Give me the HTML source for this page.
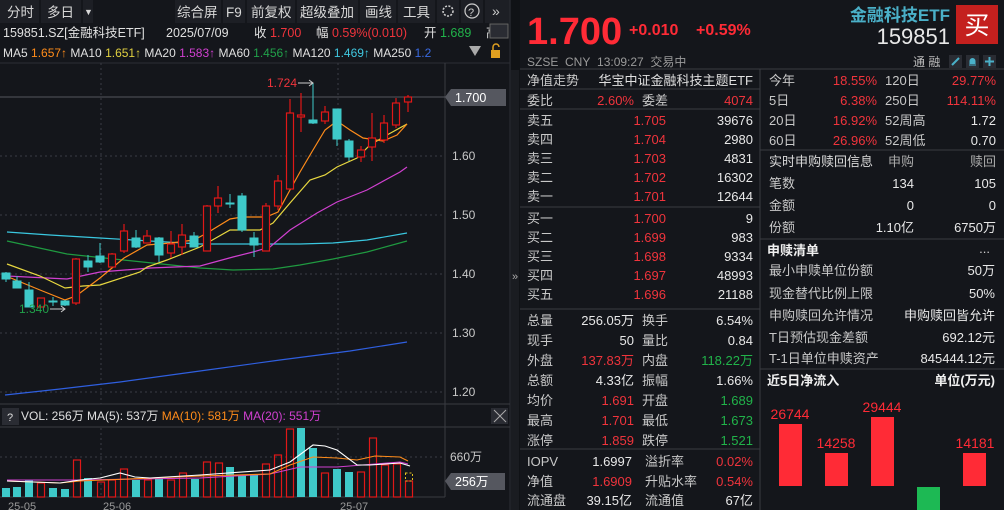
<!DOCTYPE html>
<html><head><meta charset="utf-8"><style>
html,body{margin:0;padding:0;background:#14161b;width:1004px;height:510px;overflow:hidden}
svg{display:block;font-family:"Liberation Sans","Noto Sans CJK SC",sans-serif}
</style></head><body>
<svg width="1004" height="510" viewBox="0 0 1004 510" xmlns="http://www.w3.org/2000/svg">
<rect width="1004" height="510" fill="#14161b"/>
<!-- toolbar -->
<g fill="#1d1f25">
<rect x="0" y="0" width="39" height="23"/><rect x="41" y="0" width="40" height="23"/><rect x="83" y="0" width="10" height="23"/>
<rect x="175" y="0" width="46" height="23"/><rect x="223" y="0" width="22" height="23"/><rect x="247" y="0" width="48" height="23"/><rect x="297" y="0" width="61" height="23"/><rect x="360" y="0" width="36" height="23"/><rect x="398" y="0" width="37" height="23"/><rect x="437" y="0" width="22" height="23"/><rect x="461" y="0" width="22" height="23"/><rect x="485" y="0" width="25" height="23"/>
</g>
<g fill="#d8d8d8" font-size="13.5">
<text x="7" y="17">分时</text><text x="47" y="17">多日</text><text x="84" y="15" font-size="9">▼</text>
<text x="177" y="17">综合屏</text><text x="226" y="17">F9</text><text x="251" y="17">前复权</text><text x="300" y="17">超级叠加</text><text x="365" y="17">画线</text><text x="403" y="17">工具</text>
</g>
<circle cx="448" cy="11" r="5" fill="none" stroke="#ccc" stroke-width="1.6" stroke-dasharray="2 1.4"/>
<circle cx="472" cy="11" r="7" fill="none" stroke="#ccc" stroke-width="1.2"/><text x="468" y="16" fill="#ccc" font-size="11">?</text>
<text x="492" y="16" fill="#ccc" font-size="14">»</text>
<!-- info row -->
<g font-size="12.5">
<text x="3" y="37" fill="#e0e0e0">159851.SZ[金融科技ETF]</text>
<text x="166" y="37" fill="#e0e0e0">2025/07/09</text>
<text x="254" y="37" fill="#e0e0e0">收</text><text x="270" y="37" fill="#f0343c">1.700</text>
<text x="316" y="37" fill="#e0e0e0">幅</text><text x="332" y="37" fill="#f0343c">0.59%(0.010)</text>
<text x="424" y="37" fill="#e0e0e0">开</text><text x="440" y="37" fill="#21b34a">1.689</text>
<text x="486" y="37" fill="#e0e0e0">高</text>
</g>
<rect x="490" y="24" width="18" height="14" fill="#2a2c33" stroke="#666"/>
<g font-size="12">
<text x="3" y="57" fill="#e0e0e0">MA5 <tspan fill="#ff8c1a">1.657↑</tspan> MA10 <tspan fill="#e0d040">1.651↑</tspan> MA20 <tspan fill="#d040d0">1.583↑</tspan> MA60 <tspan fill="#21a04a">1.456↑</tspan> MA120 <tspan fill="#40c8e0">1.469↑</tspan> MA250 <tspan fill="#3a6ae0">1.2</tspan></text>
</g>
<path d="M469 46 L481 46 L475 56 Z" fill="#aaa"/>
<rect x="491" y="50" width="9" height="8" fill="#e0a020"/><path d="M493 50 v-3 a3 3 0 0 1 6 0" fill="none" stroke="#e0a020" stroke-width="1.5"/>
<line x1="0" y1="63" x2="510" y2="63" stroke="#2c2e34"/>
<!-- chart grid -->
<line x1="445" y1="63" x2="445" y2="497" stroke="#3a3c42"/>
<line x1="510" y1="0" x2="510" y2="510" stroke="#2c2e34"/>
<g stroke="#3a3c44" stroke-dasharray="2 3">
<line x1="0" y1="156" x2="445" y2="156"/><line x1="0" y1="215" x2="445" y2="215"/><line x1="0" y1="274" x2="445" y2="274"/><line x1="0" y1="333" x2="445" y2="333"/><line x1="0" y1="392" x2="445" y2="392"/><line x1="0" y1="457" x2="445" y2="457"/>
<line x1="101" y1="63" x2="101" y2="404"/><line x1="338" y1="63" x2="338" y2="404"/><line x1="101" y1="428" x2="101" y2="497"/><line x1="338" y1="428" x2="338" y2="497"/>
</g>
<line x1="0" y1="97" x2="445" y2="97" stroke="#55575d"/>
<g fill="#c8c8c8" font-size="12">
<text x="452" y="160">1.60</text><text x="452" y="219">1.50</text><text x="452" y="278">1.40</text><text x="452" y="337">1.30</text><text x="452" y="396">1.20</text>
</g>
<path d="M445 97 L451 89 H506 V106 H451 Z" fill="#55575f"/>
<text x="455" y="102" fill="#fff" font-size="12.5">1.700</text>
<!-- MA lines -->
<g fill="none" stroke-width="1.2">
<polyline stroke="#2f5fe0" points="5,395 60,389 120,382 200,371 280,360 350,351 407,342"/>
<polyline stroke="#1f9a40" points="7,241 67,254 133,261 200,268 233,270 273,269 300,265 333,259 367,252 407,241"/>
<polyline stroke="#3ac8e0" points="7,232 50,235 100,238 133,240 200,244 267,244 300,244 333,243 367,240 407,233"/>
<polyline stroke="#d040d0" points="7,276 67,279 100,272 150,268 200,266 233,257 253,252 270,247 290,230 317,213 337,202 367,190 400,172 407,167"/>
<polyline stroke="#e8d840" points="7,264 40,276 65,288 83,286 100,285 140,272 147,267 167,260 200,247 230,230 260,230 273,223 290,203 310,180 325,175 337,167 357,158 370,145 387,135 407,124"/>
<polyline stroke="#ff8c1a" points="6,276 40,290 65,300 76,296 100,278 124,258 147,245 171,243 194,240 207,233 230,219 242,217 266,217 278,212 290,190 300,172 313,150 325,130 337,121 350,130 363,138 383,141 397,135 407,124"/>
</g>
<!-- candles -->
<g stroke="#3ec9c9" fill="#3ec9c9">
<line x1="6" y1="272" x2="6" y2="282"/><rect x="2" y="273" width="8" height="6"/>
<line x1="17" y1="276" x2="17" y2="288"/><rect x="13" y="281" width="8" height="7"/>
<line x1="29" y1="282" x2="29" y2="307"/><rect x="25" y="290" width="8" height="17"/>
<line x1="53" y1="297" x2="53" y2="306"/><rect x="49" y="301" width="8" height="1"/>
<line x1="65" y1="300" x2="65" y2="306"/><rect x="61" y="301" width="8" height="4"/>
<line x1="88" y1="255" x2="88" y2="272"/><rect x="84" y="261" width="8" height="6"/>
<line x1="100" y1="243" x2="100" y2="263"/><rect x="96" y="256" width="8" height="6"/>
<line x1="136" y1="230" x2="136" y2="248"/><rect x="132" y="238" width="8" height="9"/>
<line x1="159" y1="237" x2="159" y2="262"/><rect x="155" y="238" width="8" height="17"/>
<line x1="194" y1="232" x2="194" y2="247"/><rect x="190" y="236" width="8" height="11"/>
<line x1="230" y1="194" x2="230" y2="208"/><rect x="226" y="203" width="8" height="1"/>
<line x1="242" y1="193" x2="242" y2="232"/><rect x="238" y="196" width="8" height="34"/>
<line x1="254" y1="232" x2="254" y2="257"/><rect x="250" y="238" width="8" height="7"/>
<line x1="313" y1="83" x2="313" y2="124"/><rect x="309" y="120" width="8" height="3"/>
<line x1="337" y1="109" x2="337" y2="146"/><rect x="333" y="109" width="8" height="30"/>
<line x1="349" y1="139" x2="349" y2="161"/><rect x="345" y="141" width="8" height="16"/>
</g>
<g stroke="#e01818" fill="#14161b" stroke-width="1.2">
<line x1="41" y1="298" x2="41" y2="307"/><rect x="37.5" y="298" width="7" height="9"/>
<line x1="76" y1="258" x2="76" y2="305"/><rect x="72.5" y="259" width="7" height="44"/>
<line x1="112" y1="253" x2="112" y2="267"/><rect x="108.5" y="254" width="7" height="13"/>
<line x1="124" y1="224" x2="124" y2="253"/><rect x="120.5" y="231" width="7" height="20"/>
<line x1="147" y1="230" x2="147" y2="243"/><rect x="143.5" y="236" width="7" height="7"/>
<line x1="171" y1="231" x2="171" y2="258"/><rect x="167.5" y="244" width="7" height="9"/>
<line x1="182" y1="224" x2="182" y2="255"/><rect x="178.5" y="235" width="7" height="12"/>
<line x1="207" y1="205" x2="207" y2="251"/><rect x="203.5" y="206" width="7" height="45"/>
<line x1="218" y1="186" x2="218" y2="213"/><rect x="214.5" y="198" width="7" height="8"/>
<line x1="266" y1="203" x2="266" y2="251"/><rect x="262.5" y="206" width="7" height="45"/>
<line x1="278" y1="175" x2="278" y2="210"/><rect x="274.5" y="181" width="7" height="25"/>
<line x1="290" y1="99" x2="290" y2="189"/><rect x="286.5" y="113" width="7" height="76"/>
<line x1="301" y1="93" x2="301" y2="132"/><rect x="297.5" y="115" width="7" height="2"/>
<line x1="325" y1="106" x2="325" y2="124"/><rect x="321.5" y="112" width="7" height="9"/>
<line x1="361" y1="146" x2="361" y2="162"/><rect x="357.5" y="150" width="7" height="7"/>
<line x1="372" y1="113" x2="372" y2="161"/><rect x="368.5" y="138" width="7" height="9"/>
<line x1="384" y1="115" x2="384" y2="143"/><rect x="380.5" y="123" width="7" height="17"/>
<line x1="396" y1="98" x2="396" y2="128"/><rect x="392.5" y="103" width="7" height="22"/>
<line x1="408" y1="95" x2="408" y2="112"/><rect x="404.5" y="97" width="7" height="5"/>
</g>
<text x="267" y="87" fill="#f0343c" font-size="12">1.724</text>
<path d="M298 83 H313 M309 80 L313 83 L309 86" stroke="#ccc" fill="none"/>
<text x="19" y="313" fill="#21a04a" font-size="12">1.340</text>
<path d="M50 309 H65 M61 306 L65 309 L61 312" stroke="#ccc" fill="none"/>
<!-- volume panel -->
<line x1="0" y1="404" x2="510" y2="404" stroke="#3a3c42"/>
<line x1="0" y1="427" x2="510" y2="427" stroke="#3a3c42"/>
<rect x="2" y="408" width="17" height="17" fill="#2a2c33"/><text x="7" y="421" fill="#ddd" font-size="11">?</text>
<text x="21" y="420" font-size="12" fill="#e0e0e0">VOL: 256万 MA(5): 537万 <tspan fill="#ff8c1a">MA(10): 581万</tspan> <tspan fill="#d040d0">MA(20): 551万</tspan></text>
<rect x="491" y="408" width="17" height="16" fill="#2a2c33"/><path d="M494 410 L506 422 M506 410 L494 422" stroke="#aaa"/>
<text x="450" y="461" fill="#c8c8c8" font-size="12">660万</text>
<path d="M445 481 L451 473 H505 V490 H451 Z" fill="#55575f"/>
<text x="455" y="486" fill="#fff" font-size="12.5">256万</text>
<line x1="0" y1="497" x2="445" y2="497" stroke="#3a3c42"/>
<g fill="#3ec9c9">
<rect x="2" y="488" width="8" height="9"/><rect x="13" y="487" width="8" height="10"/><rect x="25" y="480" width="8" height="17"/><rect x="49" y="488" width="8" height="9"/><rect x="61" y="489" width="8" height="8"/><rect x="84" y="478" width="8" height="19"/><rect x="132" y="480" width="8" height="17"/><rect x="155" y="478" width="8" height="19"/><rect x="191" y="479" width="8" height="18"/><rect x="226" y="467" width="8" height="30"/><rect x="238" y="475" width="8" height="22"/><rect x="250" y="475" width="8" height="22"/><rect x="297" y="428" width="8" height="69"/><rect x="309" y="448" width="8" height="49"/><rect x="333" y="469" width="8" height="28"/><rect x="345" y="472" width="8" height="25"/>
</g>
<g fill="none" stroke="#e01818" stroke-width="1.2">
<rect x="37.5" y="483" width="7" height="14"/><rect x="73.5" y="460" width="7" height="37"/><rect x="97.5" y="482" width="7" height="15"/><rect x="108.5" y="480" width="7" height="17"/><rect x="120.5" y="469" width="7" height="28"/><rect x="144.5" y="480" width="7" height="17"/><rect x="167.5" y="480" width="7" height="17"/><rect x="179.5" y="473" width="7" height="24"/><rect x="203.5" y="462" width="7" height="35"/><rect x="215.5" y="463" width="7" height="34"/><rect x="262.5" y="464" width="7" height="33"/><rect x="274.5" y="455" width="7" height="42"/><rect x="286.5" y="429" width="7" height="68"/><rect x="321.5" y="473" width="7" height="24"/><rect x="357.5" y="472" width="7" height="25"/><rect x="369.5" y="438" width="7" height="59"/><rect x="381.5" y="465" width="7" height="32"/><rect x="393.5" y="464" width="7" height="33"/><rect x="405.5" y="481" width="7" height="16"/>
</g>
<rect x="405.5" y="473" width="7" height="8" fill="none" stroke="#e0c020" stroke-dasharray="2 2"/>
<g fill="none" stroke-width="1.1">
<polyline stroke="#d040d0" points="7,480 80,480 200,478 270,474 300,467 337,467 375,464 400,462 408,464"/>
<polyline stroke="#ff8c1a" points="7,481 60,483 80,481 200,476 270,474 290,465 313,457 337,458 357,460 375,456 400,457 408,461"/>
<polyline stroke="#ffffff" points="7,481 60,483 80,480 100,478 120,473 135,477 150,478 200,475 270,470 290,462 313,445 325,446 337,450 357,465 370,465 400,463 410,466"/>
</g>
<g fill="#9a9a9a" font-size="11"><text x="8" y="510">25-05</text><text x="103" y="510">25-06</text><text x="340" y="510">25-07</text></g>
<!-- right panel -->
<rect x="511" y="0" width="9" height="510" fill="#101216"/>
<rect x="511" y="70" width="8" height="440" fill="#1a1c21"/>
<text x="512" y="280" fill="#aaa" font-size="11">»</text>
<text x="527" y="44" fill="#ff2b36" font-size="38" font-weight="bold">1.700</text>
<text x="629" y="35" fill="#ff2b36" font-size="16" font-weight="bold">+0.010</text>
<text x="696" y="35" fill="#ff2b36" font-size="16" font-weight="bold">+0.59%</text>
<text x="950" y="21" fill="#4ab0c8" font-size="17" font-weight="bold" text-anchor="end">金融科技ETF</text>
<text x="950" y="44" fill="#e8e8e8" font-size="22" text-anchor="end">159851</text>
<rect x="956" y="5" width="42" height="39" fill="#c4201e"/>
<text x="977" y="34" fill="#fff" font-size="25" text-anchor="middle">买</text>
<text x="527" y="66" fill="#9a9a9a" font-size="12">SZSE&#160;&#160;CNY&#160;&#160;13:09:27&#160;&#160;交易中</text>
<text x="913" y="66" fill="#bbb" font-size="12">通 融</text>
<rect x="949" y="55" width="13" height="13" fill="#2a2c33"/><path d="M952 65 L959 58" stroke="#4ab0c8" stroke-width="2"/>
<rect x="966" y="55" width="13" height="13" fill="#2a2c33"/><path d="M969 65 h7 M970 64 v-3 a2.5 2.5 0 0 1 5 0 v3" fill="#4ab0c8" stroke="#4ab0c8"/>
<rect x="983" y="55" width="13" height="13" fill="#2a2c33"/><path d="M989.5 57 v9 M985 61.5 h9" stroke="#4ab0c8" stroke-width="2"/>
<g stroke="#3a3c42">
<line x1="520" y1="69" x2="1004" y2="69"/>
<line x1="760" y1="69" x2="760" y2="510"/>
<line x1="520" y1="89" x2="760" y2="89"/>
<line x1="520" y1="109" x2="760" y2="109"/>
<line x1="520" y1="207" x2="760" y2="207"/>
<line x1="520" y1="309" x2="760" y2="309"/>
<line x1="520" y1="449" x2="760" y2="449"/>
<line x1="760" y1="150" x2="1004" y2="150"/>
<line x1="760" y1="239" x2="1004" y2="239"/>
<line x1="760" y1="369" x2="1004" y2="369"/>
</g>
<g font-size="13" fill="#c8c8c8">
<text x="527" y="85">净值走势</text><text x="753" y="85" text-anchor="end" fill="#e0e0e0">华宝中证金融科技主题ETF</text>
<text x="527" y="105">委比</text><text x="634" y="105" text-anchor="end" fill="#f0343c">2.60%</text><text x="642" y="105">委差</text><text x="753" y="105" text-anchor="end" fill="#f0343c">4074</text>
<text x="527" y="125">卖五</text><text x="527" y="144">卖四</text><text x="527" y="163">卖三</text><text x="527" y="182">卖二</text><text x="527" y="201">卖一</text>
<text x="527" y="223">买一</text><text x="527" y="242">买二</text><text x="527" y="261">买三</text><text x="527" y="280">买四</text><text x="527" y="299">买五</text>
<g fill="#f0343c" text-anchor="end">
<text x="666" y="125">1.705</text><text x="666" y="144">1.704</text><text x="666" y="163">1.703</text><text x="666" y="182">1.702</text><text x="666" y="201">1.701</text>
<text x="666" y="223">1.700</text><text x="666" y="242">1.699</text><text x="666" y="261">1.698</text><text x="666" y="280">1.697</text><text x="666" y="299">1.696</text>
</g>
<g fill="#e8e8e8" text-anchor="end">
<text x="753" y="125">39676</text><text x="753" y="144">2980</text><text x="753" y="163">4831</text><text x="753" y="182">16302</text><text x="753" y="201">12644</text>
<text x="753" y="223">9</text><text x="753" y="242">983</text><text x="753" y="261">9334</text><text x="753" y="280">48993</text><text x="753" y="299">21188</text>
</g>
<text x="527" y="325">总量</text><text x="527" y="345">现手</text><text x="527" y="365">外盘</text><text x="527" y="385">总额</text><text x="527" y="405">均价</text><text x="527" y="425">最高</text><text x="527" y="445">涨停</text>
<text x="642" y="325">换手</text><text x="642" y="345">量比</text><text x="642" y="365">内盘</text><text x="642" y="385">振幅</text><text x="642" y="405">开盘</text><text x="642" y="425">最低</text><text x="642" y="445">跌停</text>
<g text-anchor="end">
<text x="634" y="325" fill="#e8e8e8">256.05万</text><text x="634" y="345" fill="#e8e8e8">50</text><text x="634" y="365" fill="#f0343c">137.83万</text><text x="634" y="385" fill="#e8e8e8">4.33亿</text><text x="634" y="405" fill="#f0343c">1.691</text><text x="634" y="425" fill="#f0343c">1.701</text><text x="634" y="445" fill="#f0343c">1.859</text>
<text x="753" y="325" fill="#e8e8e8">6.54%</text><text x="753" y="345" fill="#e8e8e8">0.84</text><text x="753" y="365" fill="#21b34a">118.22万</text><text x="753" y="385" fill="#e8e8e8">1.66%</text><text x="753" y="405" fill="#21b34a">1.689</text><text x="753" y="425" fill="#21b34a">1.673</text><text x="753" y="445" fill="#21b34a">1.521</text>
</g>
<text x="527" y="466">IOPV</text><text x="527" y="486">净值</text><text x="527" y="505">流通盘</text>
<text x="645" y="466">溢折率</text><text x="645" y="486">升贴水率</text><text x="645" y="505">流通值</text>
<g text-anchor="end">
<text x="632" y="466" fill="#e8e8e8">1.6997</text><text x="632" y="486" fill="#f0343c">1.6909</text><text x="632" y="505" fill="#e8e8e8">39.15亿</text>
<text x="753" y="466" fill="#f0343c">0.02%</text><text x="753" y="486" fill="#f0343c">0.54%</text><text x="753" y="505" fill="#e8e8e8">67亿</text>
</g>
<!-- right column -->
<text x="769" y="85">今年</text><text x="769" y="105">5日</text><text x="769" y="125">20日</text><text x="769" y="145">60日</text>
<text x="885" y="85">120日</text><text x="885" y="105">250日</text><text x="885" y="125">52周高</text><text x="885" y="145">52周低</text>
<g text-anchor="end">
<text x="877" y="85" fill="#f0343c">18.55%</text><text x="877" y="105" fill="#f0343c">6.38%</text><text x="877" y="125" fill="#f0343c">16.92%</text><text x="877" y="145" fill="#f0343c">26.96%</text>
<text x="996" y="85" fill="#f0343c">29.77%</text><text x="996" y="105" fill="#f0343c">114.11%</text><text x="996" y="125" fill="#e8e8e8">1.72</text><text x="996" y="145" fill="#e8e8e8">0.70</text>
</g>
<text x="769" y="166" fill="#d8d8d8">实时申购赎回信息</text><text x="914" y="166" text-anchor="end" fill="#aaa">申购</text><text x="996" y="166" text-anchor="end" fill="#aaa">赎回</text>
<text x="769" y="188">笔数</text><text x="769" y="210">金额</text><text x="769" y="232">份额</text>
<g text-anchor="end" fill="#e8e8e8">
<text x="914" y="188">134</text><text x="914" y="210">0</text><text x="914" y="232">1.10亿</text>
<text x="996" y="188">105</text><text x="996" y="210">0</text><text x="996" y="232">6750万</text>
</g>
<text x="767" y="255" fill="#f0f0f0" font-weight="bold">申赎清单</text><text x="990" y="253" fill="#ccc" text-anchor="end">...</text>
<text x="769" y="275">最小申赎单位份额</text><text x="769" y="298">现金替代比例上限</text><text x="769" y="320">申购赎回允许情况</text><text x="769" y="342">T日预估现金差额</text><text x="769" y="363">T-1日单位申赎资产</text>
<g text-anchor="end" fill="#e8e8e8">
<text x="995" y="275">50万</text><text x="995" y="298">50%</text><text x="995" y="320">申购赎回皆允许</text><text x="995" y="342">692.12元</text><text x="995" y="363">845444.12元</text>
</g>
<text x="767" y="385" fill="#f0f0f0" font-weight="bold">近5日净流入</text><text x="995" y="385" fill="#f0f0f0" font-weight="bold" text-anchor="end">单位(万元)</text>
</g>
<g fill="#ff2b36">
<rect x="779" y="424" width="23" height="62"/><rect x="825" y="453" width="23" height="33"/><rect x="871" y="417" width="23" height="69"/><rect x="963" y="453" width="23" height="33"/>
</g>
<rect x="917" y="487" width="23" height="23" fill="#1db954"/>
<g fill="#ff2b36" font-size="14" text-anchor="middle">
<text x="790" y="419">26744</text><text x="836" y="448">14258</text><text x="882" y="412">29444</text><text x="975" y="448">14181</text>
</g>
</svg>
</body></html>
